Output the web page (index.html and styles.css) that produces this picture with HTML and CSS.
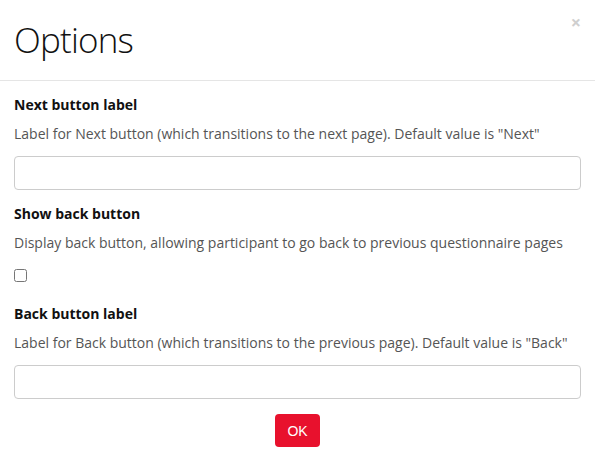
FILE: index.html
```html
<!DOCTYPE html>
<html>
<head>
<meta charset="utf-8">
<link rel="stylesheet" href="styles.css">
</head>
<body>
<div class="modal">
  <div class="modal-header">
    <h1 class="title">Options</h1>
    <span class="close">×</span>
  </div>
  <div class="modal-body">
    <div class="field">
      <div class="label">Next button label</div>
      <div class="desc">Label for Next button (which transitions to the next page). Default value is "Next"</div>
      <input class="text" type="text">
    </div>
    <div class="field">
      <div class="label">Show back button</div>
      <div class="desc">Display back button, allowing participant to go back to previous questionnaire pages</div>
      <input class="check" type="checkbox">
    </div>
    <div class="field field-last">
      <div class="label">Back button label</div>
      <div class="desc">Label for Back button (which transitions to the previous page). Default value is "Back"</div>
      <input class="text" type="text">
    </div>
    <div class="actions">
      <button class="ok">OK</button>
    </div>
  </div>
</div>
</body>
</html>
```

FILE: styles.css
```css
html, body {
  margin: 0;
  padding: 0;
  background: #fff;
}
body {
  font-family: "Open Sans", "Liberation Sans", sans-serif;
  color: #222;
  font-size: 14px;
}
.modal {
  width: 595px;
  height: 463px;
  box-sizing: border-box;
}
.modal-header {
  height: 80px;
  border-bottom: 1px solid #e5e5e5;
  display: flex;
  justify-content: space-between;
  align-items: flex-start;
  padding: 0 14px;
}
.title {
  margin: 16px 0 0 0;
  font-size: 35px;
  font-weight: 300;
  line-height: 48px;
  color: #111;
  letter-spacing: -0.8px;
}
.close {
  margin-top: 10px;
  font-size: 18px;
  font-weight: 700;
  color: #cfcfcf;
  line-height: 24px;
}
.modal-body {
  padding: 14px 14px 0 14px;
}
.field {
  display: flex;
  flex-direction: column;
  margin-bottom: 14px;
}
.label {
  font-weight: 700;
  font-size: 14px;
  line-height: 20px;
  color: #111;
}
.desc {
  margin-top: 9px;
  line-height: 20px;
  color: #555;
  font-size: 14px;
}
.text {
  margin: 12px 0 0 0;
  height: 34px;
  box-sizing: border-box;
  border: 1px solid #ccc;
  border-radius: 4px;
  width: 100%;
}
.check {
  margin: 16px 0 8px 0;
  width: 13px;
  height: 13px;
  align-self: flex-start;
}
.field-last {
  margin-bottom: 15px;
}
.actions {
  display: flex;
  justify-content: center;
}
.ok {
  background: #e8112d;
  color: #fff;
  border: none;
  border-radius: 4px;
  height: 33px;
  width: 45px;
  font-family: "Liberation Sans", Arial, sans-serif;
  font-size: 14px;
  padding: 0;
}
```
